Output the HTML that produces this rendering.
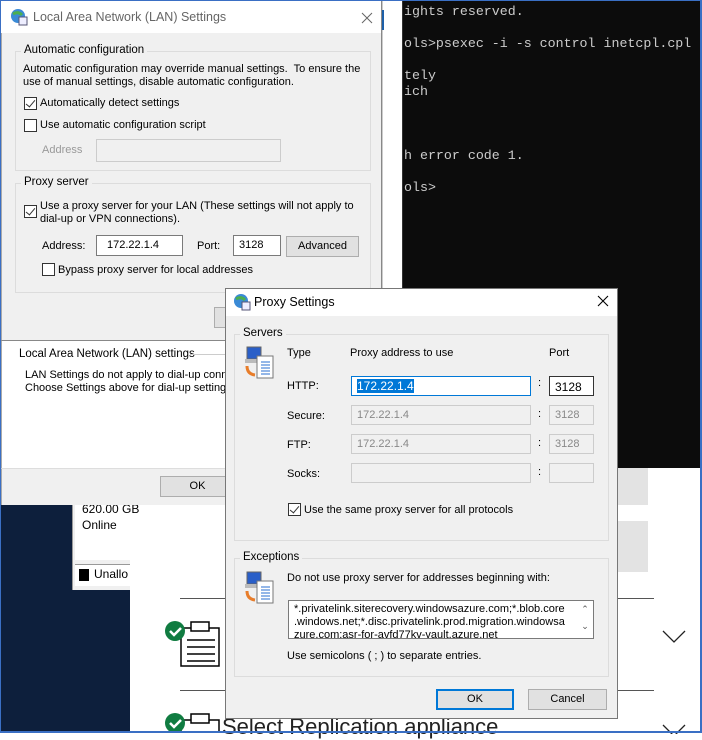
<!DOCTYPE html>
<html><head><meta charset="utf-8"><style>
*{box-sizing:border-box;margin:0;padding:0}
body{width:702px;height:733px;overflow:hidden;position:relative;background:#fff;font-family:"Liberation Sans",sans-serif;font-size:11px;color:#000}
.a{position:absolute}
.t{position:absolute;white-space:nowrap}
.grp{position:absolute;border:1px solid #dcdcdc}
.lg{position:absolute;background:#f0f0f0;padding:0 3px;top:-8px;left:5px;white-space:nowrap;font-size:11.5px}
.cb{position:absolute;width:13px;height:13px;border:1px solid #333;background:#fff}
.cb.on::after{content:"";position:absolute;left:3px;top:0px;width:4px;height:8px;border:solid #333;border-width:0 1.5px 1.5px 0;transform:rotate(40deg)}
.in{position:absolute;background:#fff;border:1px solid #7a7a7a;padding:3px 0 0 10px}
.dis{position:absolute;background:#f0f0f0;border:1px solid #ccc;color:#888;padding:3px 0 0 5px}
.btn{position:absolute;background:#e1e1e1;border:1px solid #adadad;text-align:center;line-height:19px}
.mono{font-family:"Liberation Mono",monospace;font-size:13.3px;color:#ccc}
</style></head><body>
<!-- terminal -->
<div class="a" style="left:402px;top:0;width:300px;height:468px;background:#0c0c0c;border-left:1px solid #333"></div>
<div class="t mono" style="left:404px;top:4px">ights reserved.</div>
<div class="t mono" style="left:404px;top:36px">ols&gt;psexec -i -s control inetcpl.cpl</div>
<div class="t mono" style="left:404px;top:68px">tely</div>
<div class="t mono" style="left:404px;top:84px">ich</div>
<div class="t mono" style="left:404px;top:148px">h error code 1.</div>
<div class="t mono" style="left:404px;top:180px">ols&gt;</div>
<div class="a" style="left:382px;top:0;width:20px;height:290px;background:#fff;border-left:1px solid #ccc"></div>
<div class="a" style="left:382px;top:10px;width:2px;height:20px;background:#1d5fa8"></div>

<!-- bottom right white area -->
<div class="a" style="left:618px;top:468px;width:30px;height:37px;background:#e3e3e3"></div>
<div class="a" style="left:618px;top:521px;width:30px;height:51px;background:#e3e3e3"></div>
<div class="a" style="left:180px;top:598px;width:474px;height:1px;background:#555"></div>
<div class="a" style="left:180px;top:690px;width:474px;height:1px;background:#555"></div>
<svg class="a" style="left:662px;top:630px" width="24" height="14"><path d="M1 1 L12 12 L23 1" fill="none" stroke="#222" stroke-width="1.3"/></svg>
<svg class="a" style="left:662px;top:724px" width="24" height="10"><path d="M1 1 L12 12 L23 1" fill="none" stroke="#222" stroke-width="1.3"/></svg>
<div class="t" style="left:222px;top:714px;font-size:22px;color:#222">Select Replication appliance</div>

<!-- desktop -->
<div class="a" style="left:0;top:505px;width:130px;height:228px;background:#0d1f3c"></div>
<div class="a" style="left:72px;top:505px;width:58px;height:85px;background:#f0f0f0;border-left:1px solid #999"></div>
<div class="a" style="left:75px;top:505px;width:55px;height:55px;background:#fff"></div>
<div class="t" style="left:82px;top:502px;font-size:12px">620.00 GB</div>
<div class="t" style="left:82px;top:518px;font-size:12px">Online</div>
<div class="a" style="left:75px;top:564px;width:55px;height:22px;background:#fff;border-top:1px solid #999"></div>
<div class="a" style="left:79px;top:569px;width:10px;height:12px;background:#000"></div>
<div class="t" style="left:94px;top:567px;font-size:12px">Unallo</div>

<!-- clipboard icons -->
<svg class="a" style="left:163px;top:620px" width="60" height="48"><rect x="18" y="8" width="38" height="38" fill="#fff" stroke="#000" stroke-width="1.5"/><rect x="28" y="2" width="18" height="9" fill="#fff" stroke="#000" stroke-width="1.5"/><path d="M24 20h28M24 27h28M24 34h28M24 41h28" stroke="#000" stroke-width="1.5"/><circle cx="12" cy="11" r="10" fill="#107c41"/><path d="M7 11l4 4 7-7" stroke="#fff" stroke-width="2.5" fill="none"/></svg>
<svg class="a" style="left:163px;top:712px" width="60" height="21"><rect x="18" y="8" width="38" height="38" fill="#fff" stroke="#000" stroke-width="1.5"/><rect x="28" y="2" width="18" height="9" fill="#fff" stroke="#000" stroke-width="1.5"/><circle cx="12" cy="11" r="10" fill="#107c41"/><path d="M7 11l4 4 7-7" stroke="#fff" stroke-width="2.5" fill="none"/></svg>

<!-- Internet options lower part -->
<div class="a" style="left:0;top:340px;width:225px;height:165px;background:#fff;border-left:2px solid #aaa"></div>
<div class="t" style="left:19px;top:348px;font-size:11.5px">Local Area Network (LAN) settings</div>
<div class="a" style="left:190px;top:354px;width:35px;height:1px;background:#ccc"></div>
<div class="t" style="left:25px;top:369px">LAN Settings do not apply to dial-up conn</div>
<div class="t" style="left:25px;top:382px">Choose Settings above for dial-up setting</div>
<div class="a" style="left:0;top:468px;width:225px;height:37px;background:#f0f0f0;border-top:1px solid #ddd;border-left:2px solid #aaa"></div>
<div class="btn" style="left:160px;top:476px;width:75px;height:21px">OK</div>

<!-- LAN dialog -->
<div class="a" style="left:0;top:0;width:382px;height:341px;background:#f0f0f0;border:1px solid #888;border-left:2px solid #aaa"></div>
<div class="a" style="left:1px;top:1px;width:380px;height:32px;background:#fff"></div>
<svg class="a" style="left:10px;top:8px" width="18" height="18"><circle cx="8" cy="8" r="7" fill="#3a8ad6"/><path d="M3 6q5-3 9 1" stroke="#4caf50" stroke-width="3" fill="none"/><rect x="9" y="9" width="8" height="8" fill="#eef" stroke="#557"/></svg>
<div class="t" style="left:33px;top:10px;font-size:12.5px;color:#666">Local Area Network (LAN) Settings</div>
<svg class="a" style="left:361px;top:12px" width="12" height="12"><path d="M1 1L11 11M11 1L1 11" stroke="#666" stroke-width="1"/></svg>
<div class="grp" style="left:15px;top:51px;width:356px;height:120px"><span class="lg">Automatic configuration</span></div>
<div class="t" style="left:23px;top:63px">Automatic configuration may override manual settings.&nbsp; To ensure the</div>
<div class="t" style="left:23px;top:76px">use of manual settings, disable automatic configuration.</div>
<div class="cb on" style="left:24px;top:97px"></div><div class="t" style="left:40px;top:97px">Automatically detect settings</div>
<div class="cb" style="left:24px;top:119px"></div><div class="t" style="left:40px;top:119px">Use automatic configuration script</div>
<div class="t" style="left:42px;top:144px;color:#999">Address</div>
<div class="a" style="left:96px;top:139px;width:185px;height:23px;border:1px solid #ccc"></div>
<div class="grp" style="left:15px;top:183px;width:356px;height:110px"><span class="lg">Proxy server</span></div>
<div class="cb on" style="left:24px;top:205px"></div>
<div class="t" style="left:40px;top:200px">Use a proxy server for your LAN (These settings will not apply to</div>
<div class="t" style="left:40px;top:213px">dial-up or VPN connections).</div>
<div class="t" style="left:42px;top:240px">Address:</div>
<div class="in" style="left:96px;top:235px;width:87px;height:21px">172.22.1.4</div>
<div class="t" style="left:197px;top:240px">Port:</div>
<div class="in" style="left:233px;top:235px;width:48px;height:21px;padding-left:5px">3128</div>
<div class="btn" style="left:286px;top:236px;width:73px;height:21px">Advanced</div>
<div class="cb" style="left:42px;top:263px"></div><div class="t" style="left:58px;top:264px">Bypass proxy server for local addresses</div>
<div class="btn" style="left:214px;top:307px;width:20px;height:21px"></div>

<!-- Proxy Settings dialog -->
<div class="a" style="left:225px;top:288px;width:393px;height:431px;background:#f0f0f0;border:1px solid #777"></div>
<div class="a" style="left:226px;top:289px;width:391px;height:27px;background:#fff"></div>
<svg class="a" style="left:233px;top:293px" width="18" height="18"><circle cx="8" cy="8" r="7" fill="#3a8ad6"/><path d="M3 6q5-3 9 1" stroke="#4caf50" stroke-width="3" fill="none"/><rect x="9" y="9" width="8" height="8" fill="#eef" stroke="#557"/></svg>
<div class="t" style="left:254px;top:295px;font-size:12.5px">Proxy Settings</div>
<svg class="a" style="left:597px;top:295px" width="12" height="12"><path d="M1 1L11 11M11 1L1 11" stroke="#000" stroke-width="1.1"/></svg>
<div class="grp" style="left:234px;top:334px;width:375px;height:207px"><span class="lg">Servers</span></div>
<svg class="a" style="left:243px;top:346px" width="32" height="34"><rect x="4" y="1" width="14" height="12" fill="#2a5fc8" stroke="#666"/><rect x="2" y="13" width="18" height="4" fill="#bbb"/><rect x="14" y="10" width="16" height="22" fill="#fff" stroke="#777"/><path d="M18 16h9M18 19h9M18 22h9M18 25h9M18 28h9" stroke="#2a6fd0"/><path d="M4 20q0 8 8 9" stroke="#e87d2a" stroke-width="3" fill="none"/></svg>
<div class="t" style="left:287px;top:347px">Type</div>
<div class="t" style="left:350px;top:347px">Proxy address to use</div>
<div class="t" style="left:549px;top:347px">Port</div>
<div class="t" style="left:287px;top:380px">HTTP:</div>
<div class="a" style="left:351px;top:376px;width:180px;height:20px;background:#fff;border:1px solid #0078d7"></div>
<div class="t" style="left:357px;top:379px;background:#0078d7;color:#fff;font-size:12px">172.22.1.4</div>
<div class="t" style="left:538px;top:377px">:</div>
<div class="in" style="left:549px;top:376px;width:45px;height:20px;border-color:#333;padding-left:5px;font-size:12px">3128</div>
<div class="t" style="left:287px;top:410px">Secure:</div>
<div class="dis" style="left:351px;top:405px;width:180px;height:20px">172.22.1.4</div>
<div class="t" style="left:538px;top:408px">:</div>
<div class="dis" style="left:549px;top:405px;width:45px;height:20px">3128</div>
<div class="t" style="left:287px;top:439px">FTP:</div>
<div class="dis" style="left:351px;top:434px;width:180px;height:20px">172.22.1.4</div>
<div class="t" style="left:538px;top:437px">:</div>
<div class="dis" style="left:549px;top:434px;width:45px;height:20px">3128</div>
<div class="t" style="left:287px;top:468px">Socks:</div>
<div class="dis" style="left:351px;top:463px;width:180px;height:20px"></div>
<div class="t" style="left:538px;top:466px">:</div>
<div class="dis" style="left:549px;top:463px;width:45px;height:20px"></div>
<div class="cb on" style="left:288px;top:503px"></div>
<div class="t" style="left:304px;top:504px">Use the same proxy server for all protocols</div>
<div class="grp" style="left:234px;top:558px;width:375px;height:119px"><span class="lg">Exceptions</span></div>
<svg class="a" style="left:243px;top:571px" width="32" height="34"><rect x="4" y="1" width="14" height="12" fill="#2a5fc8" stroke="#666"/><rect x="2" y="13" width="18" height="4" fill="#bbb"/><rect x="14" y="10" width="16" height="22" fill="#fff" stroke="#777"/><path d="M18 16h9M18 19h9M18 22h9M18 25h9M18 28h9" stroke="#2a6fd0"/><path d="M4 20q0 8 8 9" stroke="#e87d2a" stroke-width="3" fill="none"/></svg>
<div class="t" style="left:287px;top:572px">Do not use proxy server for addresses beginning with:</div>
<div class="a" style="left:288px;top:600px;width:306px;height:39px;background:#fff;border:1px solid #7a7a7a;overflow:hidden">
<div style="position:absolute;left:5px;top:2px;line-height:13px;white-space:nowrap;font-size:11px">*.privatelink.siterecovery.windowsazure.com;*.blob.core<br>.windows.net;*.disc.privatelink.prod.migration.windowsa<br>zure.com;asr-for-avfd77kv-vault.azure.net</div>
<div style="position:absolute;right:0;top:0;width:16px;height:37px;background:#fff;font-size:9px;color:#555;text-align:center;line-height:17px">&#8963;<br>&#8964;</div></div>
<div class="t" style="left:287px;top:650px">Use semicolons ( ; ) to separate entries.</div>
<div class="btn" style="left:436px;top:689px;width:78px;height:21px;border:2px solid #0078d7;line-height:17px">OK</div>
<div class="btn" style="left:528px;top:689px;width:79px;height:21px">Cancel</div>

<!-- outer frame -->
<div class="a" style="left:0;top:0;width:702px;height:733px;border:2px solid #3a6fc4;border-top:1px solid #3a6fc4;border-left:1px solid #3a6fc4"></div>
</body></html>
